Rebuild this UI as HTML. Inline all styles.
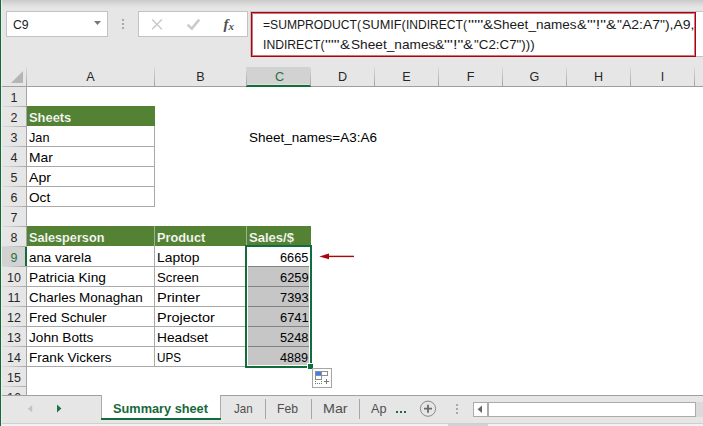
<!DOCTYPE html><html><head><meta charset="utf-8"><title>Summary sheet</title><style>
*{box-sizing:border-box;margin:0;padding:0}
html,body{width:703px;height:426px;overflow:hidden;background:#e6e6e6}
#root{position:relative;width:703px;height:426px;overflow:hidden;background:#e6e6e6;color:#000;font-family:"Liberation Sans",sans-serif;font-size:13.4px}
#root div,#root svg{position:absolute}
.t{white-space:nowrap;line-height:20px;height:20px;transform-origin:0 0}
.ch{transform:scaleX(.94);top:67px;height:20px;line-height:20px;text-align:center;color:#262626}
.rh{transform:scaleX(.93);left:2px;width:24px;height:20px;line-height:20px;text-align:center;color:#262626}
</style></head><body><div id="root">
<div style="left:0;top:0;width:703px;height:9px;background:linear-gradient(#cac9c8,#d9d9d9 40%,#e3e3e3 75%,#e6e6e6)"></div>
<div style="left:6px;top:11px;width:102px;height:26px;background:#fff;border:1px solid #c3c3c3"></div>
<svg style="left:92px;top:19px" width="12" height="8"><path d="M2 2 H9 L5.5 6 Z" fill="#777"/></svg>
<div style="left:122px;top:19px;width:2px;height:2px;background:#a8a8a8;"></div>
<div style="left:122px;top:23px;width:2px;height:2px;background:#a8a8a8;"></div>
<div style="left:122px;top:27px;width:2px;height:2px;background:#a8a8a8;"></div>
<div style="left:138px;top:11px;width:110px;height:26px;background:#fff;border:1px solid #c3c3c3"></div>
<svg style="left:138px;top:11px" width="110" height="26" viewBox="0 0 110 26"><path d="M14.2 8.6 L23.8 18.2 M23.8 8.6 L14.2 18.2" stroke="#c8c8c8" stroke-width="1.4" fill="none"/><path d="M49.6 13.6 L53.8 17.6 L61.2 8.6" stroke="#cbcbcb" stroke-width="2.6" fill="none"/><text x="85.5" y="17.5" font-family="Liberation Serif,serif" font-style="italic" font-weight="bold" font-size="15" fill="#505050">f</text><text x="90.5" y="18.5" font-family="Liberation Serif,serif" font-style="italic" font-weight="bold" font-size="11" fill="#505050">x</text></svg>
<div style="left:250px;top:11px;width:460px;height:46px;background:#fff;border:1px solid #c3c3c3"></div>
<div style="left:251px;top:12px;width:445px;height:45px;border:1px solid #a6040c;box-shadow:inset 0 0 0 1px #d4757b"></div>
<div style="left:27px;top:87px;width:676px;height:308px;background:#fff;"></div>
<div style="left:2px;top:86px;width:701px;height:1px;background:#9f9f9f;"></div>
<div style="left:26px;top:67px;width:1px;height:20px;background:linear-gradient(#dcdcdc,#a2a2a2);"></div>
<div style="left:26px;top:87px;width:1px;height:308px;background:#a6a6a6;"></div>
<svg style="left:11px;top:71px" width="13" height="13"><path d="M12 0 V12 H0 Z" fill="#b5b5b5"/></svg>
<div style="left:247px;top:67px;width:63px;height:18px;background:#d2d2d2;"></div>
<div style="left:247px;top:84px;width:63px;height:1px;background:#e2e0e0;"></div>
<div style="left:246px;top:85px;width:65px;height:2px;background:#116d3c;"></div>
<div class="ch" style="left:27px;width:127px;color:#262626">A</div>
<div class="ch" style="left:155px;width:91px;color:#262626">B</div>
<div class="ch" style="left:248px;width:63px;color:#1e7145">C</div>
<div class="ch" style="left:311px;width:63px;color:#262626">D</div>
<div class="ch" style="left:375px;width:63px;color:#262626">E</div>
<div class="ch" style="left:439px;width:63px;color:#262626">F</div>
<div class="ch" style="left:503px;width:63px;color:#262626">G</div>
<div class="ch" style="left:567px;width:63px;color:#262626">H</div>
<div class="ch" style="left:631px;width:63px;color:#262626">I</div>
<div style="left:154px;top:67px;width:1px;height:19px;background:linear-gradient(#dcdcdc,#a2a2a2);"></div>
<div style="left:246px;top:67px;width:1px;height:19px;background:linear-gradient(#dcdcdc,#a2a2a2);"></div>
<div style="left:310px;top:67px;width:1px;height:19px;background:linear-gradient(#dcdcdc,#a2a2a2);"></div>
<div style="left:374px;top:67px;width:1px;height:19px;background:linear-gradient(#dcdcdc,#a2a2a2);"></div>
<div style="left:438px;top:67px;width:1px;height:19px;background:linear-gradient(#dcdcdc,#a2a2a2);"></div>
<div style="left:502px;top:67px;width:1px;height:19px;background:linear-gradient(#dcdcdc,#a2a2a2);"></div>
<div style="left:566px;top:67px;width:1px;height:19px;background:linear-gradient(#dcdcdc,#a2a2a2);"></div>
<div style="left:630px;top:67px;width:1px;height:19px;background:linear-gradient(#dcdcdc,#a2a2a2);"></div>
<div style="left:694px;top:67px;width:1px;height:19px;background:linear-gradient(#dcdcdc,#a2a2a2);"></div>
<div class="rh" style="top:88px;color:#262626">1</div>
<div style="left:2px;top:106px;width:24px;height:1px;background:linear-gradient(to right,#dedede,#a8a8a8);"></div>
<div class="rh" style="top:108px;color:#262626">2</div>
<div style="left:2px;top:126px;width:24px;height:1px;background:linear-gradient(to right,#dedede,#a8a8a8);"></div>
<div class="rh" style="top:128px;color:#262626">3</div>
<div style="left:2px;top:146px;width:24px;height:1px;background:linear-gradient(to right,#dedede,#a8a8a8);"></div>
<div class="rh" style="top:148px;color:#262626">4</div>
<div style="left:2px;top:166px;width:24px;height:1px;background:linear-gradient(to right,#dedede,#a8a8a8);"></div>
<div class="rh" style="top:168px;color:#262626">5</div>
<div style="left:2px;top:186px;width:24px;height:1px;background:linear-gradient(to right,#dedede,#a8a8a8);"></div>
<div class="rh" style="top:188px;color:#262626">6</div>
<div style="left:2px;top:206px;width:24px;height:1px;background:linear-gradient(to right,#dedede,#a8a8a8);"></div>
<div class="rh" style="top:208px;color:#262626">7</div>
<div style="left:2px;top:226px;width:24px;height:1px;background:linear-gradient(to right,#dedede,#a8a8a8);"></div>
<div class="rh" style="top:228px;color:#262626">8</div>
<div style="left:2px;top:246px;width:24px;height:1px;background:linear-gradient(to right,#dedede,#a8a8a8);"></div>
<div style="left:2px;top:247px;width:23px;height:19px;background:#d2d2d2;"></div>
<div style="left:25px;top:247px;width:2px;height:19px;background:#116d3c;"></div>
<div class="rh" style="top:248px;color:#1e7145">9</div>
<div style="left:2px;top:266px;width:24px;height:1px;background:linear-gradient(to right,#dedede,#a8a8a8);"></div>
<div class="rh" style="top:268px;color:#262626">10</div>
<div style="left:2px;top:286px;width:24px;height:1px;background:linear-gradient(to right,#dedede,#a8a8a8);"></div>
<div class="rh" style="top:288px;color:#262626">11</div>
<div style="left:2px;top:306px;width:24px;height:1px;background:linear-gradient(to right,#dedede,#a8a8a8);"></div>
<div class="rh" style="top:308px;color:#262626">12</div>
<div style="left:2px;top:326px;width:24px;height:1px;background:linear-gradient(to right,#dedede,#a8a8a8);"></div>
<div class="rh" style="top:328px;color:#262626">13</div>
<div style="left:2px;top:346px;width:24px;height:1px;background:linear-gradient(to right,#dedede,#a8a8a8);"></div>
<div class="rh" style="top:348px;color:#262626">14</div>
<div style="left:2px;top:366px;width:24px;height:1px;background:linear-gradient(to right,#dedede,#a8a8a8);"></div>
<div class="rh" style="top:368px;color:#262626">15</div>
<div style="left:2px;top:386px;width:24px;height:1px;background:linear-gradient(to right,#dedede,#a8a8a8);"></div>
<div class="rh" style="top:388px;color:#262626">16</div>
<div style="left:2px;top:406px;width:24px;height:1px;background:linear-gradient(to right,#dedede,#a8a8a8);"></div>
<div style="left:27px;top:106px;width:128px;height:20px;background:#548235;"></div>
<div style="left:27px;top:146px;width:128px;height:1px;background:#a9a9a9;"></div>
<div style="left:27px;top:166px;width:128px;height:1px;background:#a9a9a9;"></div>
<div style="left:27px;top:186px;width:128px;height:1px;background:#a9a9a9;"></div>
<div style="left:27px;top:206px;width:128px;height:1px;background:#a9a9a9;"></div>
<div style="left:154px;top:126px;width:1px;height:81px;background:#a9a9a9;"></div>
<div style="left:27px;top:226px;width:284px;height:20px;background:#548235;"></div>
<div style="left:154px;top:226px;width:1px;height:20px;background:#9fb38f;"></div>
<div style="left:246px;top:226px;width:1px;height:20px;background:#9fb38f;"></div>
<div style="left:27px;top:266px;width:220px;height:1px;background:#a9a9a9;"></div>
<div style="left:27px;top:286px;width:220px;height:1px;background:#a9a9a9;"></div>
<div style="left:248px;top:266px;width:61px;height:1px;background:#828282;"></div>
<div style="left:248px;top:267px;width:61px;height:19px;background:#c6c6c6;"></div>
<div style="left:27px;top:306px;width:220px;height:1px;background:#a9a9a9;"></div>
<div style="left:248px;top:286px;width:61px;height:1px;background:#828282;"></div>
<div style="left:248px;top:287px;width:61px;height:19px;background:#c6c6c6;"></div>
<div style="left:27px;top:326px;width:220px;height:1px;background:#a9a9a9;"></div>
<div style="left:248px;top:306px;width:61px;height:1px;background:#828282;"></div>
<div style="left:248px;top:307px;width:61px;height:19px;background:#c6c6c6;"></div>
<div style="left:27px;top:346px;width:220px;height:1px;background:#a9a9a9;"></div>
<div style="left:248px;top:326px;width:61px;height:1px;background:#828282;"></div>
<div style="left:248px;top:327px;width:61px;height:19px;background:#c6c6c6;"></div>
<div style="left:27px;top:366px;width:220px;height:1px;background:#a9a9a9;"></div>
<div style="left:248px;top:346px;width:61px;height:1px;background:#828282;"></div>
<div style="left:248px;top:347px;width:61px;height:18px;background:#c6c6c6;"></div>
<div style="left:154px;top:246px;width:1px;height:121px;background:#a9a9a9;"></div>
<div style="left:246px;top:246px;width:1px;height:121px;background:#a9a9a9;"></div>
<div style="left:245px;top:245px;width:67px;height:2px;background:#116d3c;"></div>
<div style="left:245px;top:245px;width:2px;height:123px;background:#116d3c;"></div>
<div style="left:310px;top:245px;width:2px;height:118px;background:#116d3c;"></div>
<div style="left:245px;top:366px;width:62px;height:2px;background:#116d3c;"></div>
<div style="left:307px;top:363px;width:6px;height:6px;background:#fff;"></div>
<div style="left:308px;top:364px;width:5px;height:5px;background:#116d3c;"></div>
<svg style="left:316px;top:250px" width="42" height="13"><path d="M3.3 6.4 L13 3.6 V9.2 Z" fill="#a8050d"/><path d="M12 6.4 H38" stroke="#a8050d" stroke-width="1.4"/></svg>
<svg style="left:312px;top:368px" width="20" height="20" viewBox="0 0 20 20"><rect x="0.5" y="0.5" width="19" height="19" fill="#fdfdfd" stroke="#a6a6a6"/><rect x="3.5" y="3.5" width="12" height="4" fill="#fff" stroke="#8e8e8e"/><rect x="3.5" y="7.5" width="6" height="4" fill="#fff" stroke="#8e8e8e"/><rect x="4" y="4" width="5" height="3" fill="#3c80f6"/><rect x="9" y="4" width="1" height="3" fill="#8e8e8e"/><path d="M3 13h1v1h-1z M9 13h1v1h-1z M3 15h1v1h-1z M5 15h1v1h-1z M7 15h1v1h-1z M9 15h1v1h-1z" fill="#777"/><path d="M12 13h5v1h-5z M14 11h1v5h-1z" fill="#7a7a7a"/></svg>
<div style="left:2px;top:395px;width:701px;height:31px;background:#e6e6e6;"></div>
<div style="left:2px;top:395px;width:99px;height:1px;background:#a0a0a0;"></div>
<div style="left:220px;top:395px;width:483px;height:1px;background:#a0a0a0;"></div>
<div style="left:2px;top:423px;width:701px;height:1px;background:#cfcfcf;"></div>
<div style="left:2px;top:424px;width:701px;height:2px;background:#f1f1f1;"></div>
<div style="left:448px;top:424px;width:40px;height:2px;background:#d2d2d2;"></div>
<svg style="left:26px;top:403px" width="40" height="12"><path d="M6.2 2 V9.6 L1.8 5.8 Z" fill="#c4c4c4"/><path d="M31 1.4 V9.4 L35.4 5.4 Z" fill="#1e7145"/></svg>
<div style="left:101px;top:395px;width:120px;height:23px;background:#fff;border-left:1px solid #ababab;border-right:1px solid #ababab"></div>
<div style="left:101px;top:418px;width:120px;height:2px;background:#116d3c;"></div>
<div style="left:265px;top:399px;width:1px;height:20px;background:#a6a6a6;"></div>
<div style="left:311px;top:399px;width:1px;height:20px;background:#a6a6a6;"></div>
<div style="left:359px;top:399px;width:1px;height:20px;background:#a6a6a6;"></div>
<div style="left:396px;top:411px;width:2px;height:2px;background:#1e6b3e;"></div>
<div style="left:400px;top:411px;width:2px;height:2px;background:#1e6b3e;"></div>
<div style="left:404px;top:411px;width:2px;height:2px;background:#1e6b3e;"></div>
<svg style="left:419px;top:400px" width="18" height="18" viewBox="0 0 18 18"><circle cx="9" cy="8.7" r="7.6" fill="none" stroke="#8a8a8a" stroke-width="1"/><path d="M5 8.7 H13 M9 4.7 V12.7" stroke="#6a6a6a" stroke-width="1.8"/></svg>
<div style="left:456px;top:404px;width:2px;height:2px;background:#a8a8a8;"></div>
<div style="left:456px;top:408px;width:2px;height:2px;background:#a8a8a8;"></div>
<div style="left:456px;top:412px;width:2px;height:2px;background:#a8a8a8;"></div>
<div style="left:473px;top:402px;width:223px;height:15px;background:#fff;border:1px solid #ababab"></div>
<div style="left:487px;top:402px;width:2px;height:15px;background:#ababab;"></div>
<div style="left:696px;top:402px;width:7px;height:15px;background:#dadada;"></div>
<svg style="left:476px;top:404px" width="8" height="11"><path d="M6 1.6 V9 L1.6 5.3 Z" fill="#666"/></svg>
<div style="left:0px;top:0px;width:1px;height:426px;background:#106c3a;"></div>
<div style="left:1px;top:0px;width:1px;height:426px;background:#f1ecec;"></div>
<div class="t" style="left:12.63px;top:15px;transform:scaleX(0.9134);color:#1a1a1a;font-size:13.4px;">C9</div>
<div class="t" style="left:263.33px;top:15px;transform:scaleX(0.9051);color:#1a1a1a;font-size:13.4px;">=SUMPRODUCT(</div>
<div class="t" style="left:362.11px;top:15px;transform:scaleX(0.9477);color:#1a1a1a;font-size:13.4px;">SUMIF(</div>
<div class="t" style="left:406.08px;top:15px;transform:scaleX(0.8996);color:#1a1a1a;font-size:13.4px;">INDIRECT(</div>
<div class="t" style="left:467.71px;top:15px;transform:scaleX(1.2598);color:#1a1a1a;font-size:13.4px;">"'"</div>
<div class="t" style="left:482.83px;top:15px;transform:scaleX(1.1394);color:#1a1a1a;font-size:13.4px;">&amp;</div>
<div class="t" style="left:493.37px;top:15px;transform:scaleX(1.011);color:#1a1a1a;font-size:13.4px;">Sheet_names</div>
<div class="t" style="left:577.16px;top:15px;transform:scaleX(1.0788);color:#1a1a1a;font-size:13.4px;">&amp;</div>
<div class="t" style="left:587.15px;top:15px;transform:scaleX(1.2034);color:#1a1a1a;font-size:13.4px;">"'!"</div>
<div class="t" style="left:606.13px;top:15px;transform:scaleX(1.1394);color:#1a1a1a;font-size:13.4px;">&amp;</div>
<div class="t" style="left:616.85px;top:15px;transform:scaleX(1.0432);color:#1a1a1a;font-size:13.4px;">"A2:A7"),A9,</div>
<div class="t" style="left:262.76px;top:35px;transform:scaleX(0.9087);color:#1a1a1a;font-size:13.4px;">INDIRECT(</div>
<div class="t" style="left:325.04px;top:35px;transform:scaleX(1.2138);color:#1a1a1a;font-size:13.4px;">"'"</div>
<div class="t" style="left:339.84px;top:35px;transform:scaleX(1.1273);color:#1a1a1a;font-size:13.4px;">&amp;</div>
<div class="t" style="left:350.56px;top:35px;transform:scaleX(1.0209);color:#1a1a1a;font-size:13.4px;">Sheet_names</div>
<div class="t" style="left:434.68px;top:35px;transform:scaleX(1.0424);color:#1a1a1a;font-size:13.4px;">&amp;</div>
<div class="t" style="left:444.34px;top:35px;transform:scaleX(1.2171);color:#1a1a1a;font-size:13.4px;">"'!"</div>
<div class="t" style="left:463.34px;top:35px;transform:scaleX(1.1152);color:#1a1a1a;font-size:13.4px;">&amp;</div>
<div class="t" style="left:473.88px;top:35px;transform:scaleX(0.9971);color:#1a1a1a;font-size:13.4px;">"C2:C7")))</div>
<div class="t" style="left:29.04px;top:108px;transform:scaleX(0.9628);color:#fff;font-size:13.4px;font-weight:bold;-webkit-text-stroke:0.18px #548235;">Sheets</div>
<div class="t" style="left:28.66px;top:128px;transform:scaleX(0.9463);color:#000;font-size:13.4px;">Jan</div>
<div class="t" style="left:28.84px;top:148px;transform:scaleX(1.0345);color:#000;font-size:13.4px;">Mar</div>
<div class="t" style="left:29.2px;top:168px;transform:scaleX(1.057);color:#000;font-size:13.4px;">Apr</div>
<div class="t" style="left:28.76px;top:188px;transform:scaleX(1.0186);color:#000;font-size:13.4px;">Oct</div>
<div class="t" style="left:248.57px;top:128px;transform:scaleX(1.0076);color:#000;font-size:13.4px;">Sheet_names=A3:A6</div>
<div class="t" style="left:29.05px;top:228px;transform:scaleX(0.9465);color:#fff;font-size:13.4px;font-weight:bold;-webkit-text-stroke:0.18px #548235;">Salesperson</div>
<div class="t" style="left:156.77px;top:228px;transform:scaleX(0.9535);color:#fff;font-size:13.4px;font-weight:bold;-webkit-text-stroke:0.18px #548235;">Product</div>
<div class="t" style="left:249.04px;top:228px;transform:scaleX(0.9732);color:#fff;font-size:13.4px;font-weight:bold;-webkit-text-stroke:0.18px #548235;">Sales/$</div>
<div class="t" style="left:28.78px;top:248px;transform:scaleX(0.9972);color:#000;font-size:13.4px;">ana varela</div>
<div class="t" style="left:156.83px;top:248px;transform:scaleX(1.0369);color:#000;font-size:13.4px;">Laptop</div>
<div class="t" style="left:279.8px;top:248px;transform:scaleX(0.9537);color:#000;font-size:13.4px;">6665</div>
<div class="t" style="left:28.85px;top:268px;transform:scaleX(1.0229);color:#000;font-size:13.4px;">Patricia King</div>
<div class="t" style="left:156.68px;top:268px;transform:scaleX(0.9859);color:#000;font-size:13.4px;">Screen</div>
<div class="t" style="left:279.8px;top:268px;transform:scaleX(0.9579);color:#000;font-size:13.4px;">6259</div>
<div class="t" style="left:28.77px;top:288px;transform:scaleX(1.0052);color:#000;font-size:13.4px;">Charles Monaghan</div>
<div class="t" style="left:156.77px;top:288px;transform:scaleX(1.0911);color:#000;font-size:13.4px;">Printer</div>
<div class="t" style="left:279.68px;top:288px;transform:scaleX(0.9579);color:#000;font-size:13.4px;">7393</div>
<div class="t" style="left:28.86px;top:308px;transform:scaleX(1.0126);color:#000;font-size:13.4px;">Fred Schuler</div>
<div class="t" style="left:156.79px;top:308px;transform:scaleX(1.0794);color:#000;font-size:13.4px;">Projector</div>
<div class="t" style="left:279.8px;top:308px;transform:scaleX(0.9579);color:#000;font-size:13.4px;">6741</div>
<div class="t" style="left:28.85px;top:328px;transform:scaleX(1.0176);color:#000;font-size:13.4px;">John Botts</div>
<div class="t" style="left:156.85px;top:328px;transform:scaleX(1.0262);color:#000;font-size:13.4px;">Headset</div>
<div class="t" style="left:279.8px;top:328px;transform:scaleX(0.9537);color:#000;font-size:13.4px;">5248</div>
<div class="t" style="left:28.86px;top:348px;transform:scaleX(1.0125);color:#000;font-size:13.4px;">Frank Vickers</div>
<div class="t" style="left:157.03px;top:348px;transform:scaleX(0.8734);color:#000;font-size:13.4px;">UPS</div>
<div class="t" style="left:280.16px;top:348px;transform:scaleX(0.9455);color:#000;font-size:13.4px;">4889</div>
<div class="t" style="left:113.14px;top:399px;transform:scaleX(0.9521);color:#17693b;font-size:13.4px;font-weight:bold;">Summary sheet</div>
<div class="t" style="left:233.58px;top:399px;transform:scaleX(0.8634);color:#505050;font-size:13.4px;">Jan</div>
<div class="t" style="left:276.58px;top:399px;transform:scaleX(0.9076);color:#505050;font-size:13.4px;">Feb</div>
<div class="t" style="left:322.6px;top:399px;transform:scaleX(1.0667);color:#505050;font-size:13.4px;">Mar</div>
<div class="t" style="left:371.3px;top:399px;transform:scaleX(0.9449);color:#505050;font-size:13.4px;">Ap</div>
</div></body></html>
